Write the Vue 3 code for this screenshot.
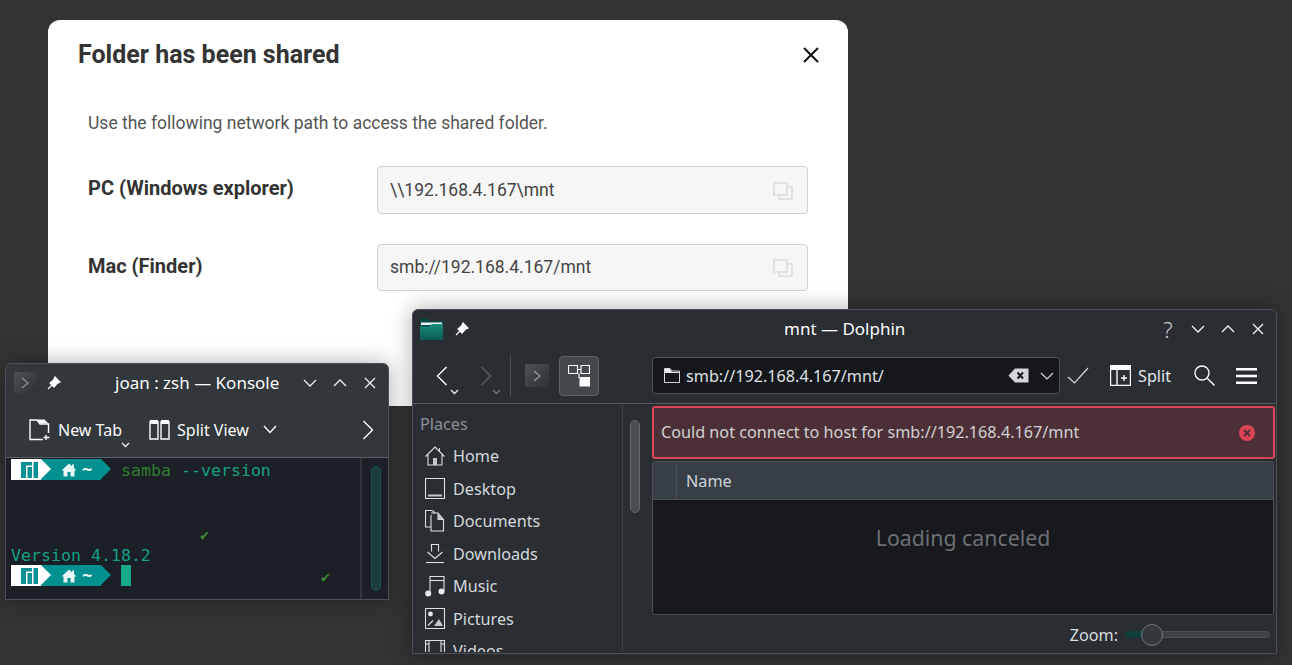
<script setup>
const places = [
  { name: 'Home', paths: ['M0.5 11.5 L10 2 L19.5 11.5', 'M3 9.5 V20 H17 V9.5', 'M14.5 3 V6.5'], solid: ['M8 13 H12 V20 H8 Z'] },
  { name: 'Desktop', paths: ['M0.5 0.5 H19.5 V20.5 H0.5 Z'], solid: ['M3 16.5 H17 V18.5 H3 Z'] },
  { name: 'Documents', paths: ['M6 17 H0.5 V0.5 H7.5', 'M6 5 V21 H18.5 V9.5 L13 3 H6', 'M7.5 0.5 L10 3', 'M13 3 V9.5 H18.5'], solid: ['M13 3 L18.5 9.5 H13 Z'] },
  { name: 'Downloads', paths: ['M6.5 8.5 V1.5 H13.5 V8.5', 'M2.5 9 L10 15.5 L17.5 9', 'M1 19.5 H19'] },
  { name: 'Music', paths: ['M5 18 V1.5 H19 V16', 'M5 5.5 H19'], dots: [[3.2, 18.5, 3], [16.5, 16.5, 3]] },
  { name: 'Pictures', paths: ['M0.5 0.5 H19.5 V20.5 H0.5 Z', 'M3 17.5 L8 12.5'], solid: ['M9 18 L14 11 L18 18 Z'], dots: [[5.5, 6, 2.4]] },
  { name: 'Videos', paths: ['M0.5 0.5 H19.5 V20.5 H0.5 Z', 'M4 0.5 V20.5', 'M16 0.5 V20.5', 'M0.5 4 H4', 'M16 4 H19.5'] }
]
const shares = [
  { label: 'PC (Windows explorer)', value: '\\\\192.168.4.167\\mnt' },
  { label: 'Mac (Finder)', value: 'smb://192.168.4.167/mnt' }
]
</script>

<template>
  <div class="desk">
    <section class="dialog">
      <header class="dlg-head">
        <h1>Folder has been shared</h1>
        <svg class="dlg-close" width="18" height="18" viewBox="0 0 18 18"><path d="M2 2 L16 16 M16 2 L2 16" /></svg>
      </header>
      <div class="dlg-body">
        <p>Use the following network path to access the shared folder.</p>
        <div v-for="s in shares" :key="s.label" class="share">
          <span class="share-label">{{ s.label }}</span>
          <div class="share-field">
            <span>{{ s.value }}</span>
            <svg width="20" height="18" viewBox="0 0 20 18"><path d="M1 1 H14 V13 H1 Z M14 5 H19 V17 H6 V13" /></svg>
          </div>
        </div>
      </div>
    </section>

    <section class="win konsole">
      <div class="titlebar k-title">
        <span class="app-tile"><svg width="10" height="12" viewBox="0 0 10 12"><path d="M2 1 L8 6 L2 11" /></svg></span>
        <svg class="pin" width="14" height="14" viewBox="0 0 14 14"><path d="M8 1 L13 6 L10 7.5 L7 11 L3 7 L6.5 4 Z M4.5 9.5 L1 13" /></svg>
        <span class="title k-t">joan : zsh — Konsole</span>
        <div class="wm">
          <svg width="14" height="14" viewBox="0 0 14 14"><path d="M1 4 L7 10 L13 4" /></svg>
          <svg width="14" height="14" viewBox="0 0 14 14"><path d="M1 10 L7 4 L13 10" /></svg>
          <svg width="14" height="14" viewBox="0 0 14 14"><path d="M2 2 L12 12 M12 2 L2 12" /></svg>
        </div>
      </div>
      <div class="k-tools">
        <svg class="ico" width="22" height="22" viewBox="0 0 22 22"><path d="M8 1 H1 V20.5 H14 M8 1 L11 5 H19.5 V14 M17 16 V21 M14.5 18.5 H20.5" /><path class="fill" d="M8 0.5 H15.5 L19.5 4.5 H11.5 Z" /></svg>
        <span class="k-lbl">New Tab</span>
        <svg class="mini" width="9" height="6" viewBox="0 0 9 6"><path d="M1 1 L4.5 4.5 L8 1" /></svg>
        <svg class="ico k-split" width="21" height="21" viewBox="0 0 21 21"><path d="M1 3 H9 V20 H1 Z M12 3 H20 V20 H12 Z" /><path class="fill" d="M1 1 H9 V5 H1 Z M12 1 H20 V5 H12 Z" /></svg>
        <span class="k-lbl">Split View</span>
        <svg class="ico k-chev" width="14" height="9" viewBox="0 0 14 9"><path d="M1 1 L7 7.5 L13 1" /></svg>
        <svg class="ico k-more" width="12" height="20" viewBox="0 0 12 20"><path d="M1.5 1 L10.5 10 L1.5 19" /></svg>
      </div>
      <div class="term">
        <div class="term-main">
          <div class="t-row">
            <span class="prompt">
              <span class="p-logo"><svg width="17" height="16" viewBox="0 0 17 16"><path d="M0 0 H11 V3.5 H5 V16 H0 Z M6.5 5 H11 V16 H6.5 Z M12.5 0 H17 V16 H12.5 Z" /></svg></span>
              <span class="p-teal"><svg width="16" height="14" viewBox="0 0 16 14"><path d="M8 0.5 L11 3.2 V1.5 H13 V5 L15.5 7.5 H13.5 V13.5 H9.5 V9 H6.5 V13.5 H2.5 V7.5 H0.5 Z" /></svg><b>~</b></span>
            </span>
            <span class="cmd"><i>samba</i> --version</span>
          </div>
          <div class="t-row"></div>
          <div class="t-row"></div>
          <div class="t-row"><span class="tick tick-a">✔</span></div>
          <div class="t-row ver">Version 4.18.2</div>
          <div class="t-row">
            <span class="prompt">
              <span class="p-logo"><svg width="17" height="16" viewBox="0 0 17 16"><path d="M0 0 H11 V3.5 H5 V16 H0 Z M6.5 5 H11 V16 H6.5 Z M12.5 0 H17 V16 H12.5 Z" /></svg></span>
              <span class="p-teal"><svg width="16" height="14" viewBox="0 0 16 14"><path d="M8 0.5 L11 3.2 V1.5 H13 V5 L15.5 7.5 H13.5 V13.5 H9.5 V9 H6.5 V13.5 H2.5 V7.5 H0.5 Z" /></svg><b>~</b></span>
            </span>
            <span class="cursor"></span>
            <span class="tick tick-b">✔</span>
          </div>
        </div>
        <div class="term-sb"><span></span></div>
      </div>
    </section>

    <section class="win dolphin">
      <div class="titlebar d-title">
        <svg class="folder" width="23" height="22" viewBox="0 0 23 22">
          <defs><linearGradient id="fg" x1="0" y1="0" x2="0" y2="1"><stop offset="0" stop-color="#1a8c7f" /><stop offset="1" stop-color="#0b5a52" /></linearGradient></defs>
          <path d="M0 1 H8 L10 3 H23 V21 H0 Z" fill="#0a4a44" />
          <path d="M1 4.5 H22 V7 H1 Z" fill="#eef1f1" />
          <path d="M0 8.5 L9 8.5 L12 6 H23 V22 H0 Z" fill="url(#fg)" />
        </svg>
        <svg class="pin d-pin" width="14" height="14" viewBox="0 0 14 14"><path d="M8 1 L13 6 L10 7.5 L7 11 L3 7 L6.5 4 Z M4.5 9.5 L1 13" /></svg>
        <span class="title d-t">mnt — Dolphin</span>
        <div class="wm">
          <span class="help">?</span>
          <svg width="14" height="14" viewBox="0 0 14 14"><path d="M1 4 L7 10 L13 4" /></svg>
          <svg width="14" height="14" viewBox="0 0 14 14"><path d="M1 10 L7 4 L13 10" /></svg>
          <svg width="14" height="14" viewBox="0 0 14 14"><path d="M2 2 L12 12 M12 2 L2 12" /></svg>
        </div>
      </div>

      <div class="d-tools">
        <svg class="ico d-back" width="12" height="20" viewBox="0 0 12 20"><path d="M10.5 1 L1.5 10 L10.5 19" /></svg>
        <svg class="mini d-m1" width="9" height="6" viewBox="0 0 9 6"><path d="M1 1 L4.5 4.5 L8 1" /></svg>
        <svg class="ico dim d-fwd" width="12" height="20" viewBox="0 0 12 20"><path d="M1.5 1 L10.5 10 L1.5 19" /></svg>
        <svg class="mini dim d-m2" width="9" height="6" viewBox="0 0 9 6"><path d="M1 1 L4.5 4.5 L8 1" /></svg>
        <span class="d-sep"></span>
        <span class="term-tile"><svg width="8" height="12" viewBox="0 0 8 12"><path d="M1 1 L7 6 L1 11" /></svg></span>
        <span class="tree-btn">
          <svg width="22" height="22" viewBox="0 0 22 22">
            <path class="thin" d="M0.5 0.5 H9.5 V8.5 H0.5 Z M13 0.5 H21.5 V8.5 H13 Z M9.5 4.5 H13 M11 8.5 V13" />
            <rect x="11.5" y="12" width="10.5" height="9.5" fill="#fcfcfc" />
          </svg>
        </span>
        <div class="loc">
          <svg class="loc-ico" width="16" height="15" viewBox="0 0 16 15"><path d="M0.5 0.5 H6 L8 3 H15.5 V14.5 H0.5 Z" fill="none" stroke="#d6d9dc" /><path d="M1 1 H6 L8 4 H15 V5 H1 Z" fill="#e6e8ea" /></svg>
          <span class="loc-txt">smb://192.168.4.167/mnt/</span>
          <svg class="loc-clear" width="21" height="15" viewBox="0 0 21 15"><path d="M7 0.5 H20.5 V14.5 H7 L0.5 7.5 Z" fill="#d4d6d9" /><path d="M9.5 4.5 L15 10.5 M15 4.5 L9.5 10.5" stroke="#16181c" stroke-width="2" fill="none" /></svg>
          <svg class="ico loc-drop" width="14" height="8" viewBox="0 0 14 8"><path d="M1 1 L7 7 L13 1" /></svg>
        </div>
        <svg class="ico d-check" width="22" height="17" viewBox="0 0 22 17"><path d="M1 10 L7.5 16 L21 1" /></svg>
        <svg class="ico d-split" width="21" height="21" viewBox="0 0 21 21"><path d="M0.5 0.5 H20.5 V20.5 H0.5 Z M7 5 V20.5 M14 10 V16 M11 13 H17" /><path class="fill" d="M0 0 H21 V5 H0 Z" /></svg>
        <span class="d-lbl">Split</span>
        <svg class="ico d-search" width="21" height="21" viewBox="0 0 21 21"><circle cx="8" cy="8" r="7" /><path d="M13 13 L20.5 20.5" /></svg>
        <svg class="d-menu" width="21" height="16" viewBox="0 0 21 16"><path d="M0 0 H21 V2.6 H0 Z M0 6.7 H21 V9.3 H0 Z M0 13.4 H21 V16 H0 Z" fill="#fcfcfc" /></svg>
      </div>

      <div class="d-main">
        <aside class="side">
          <div class="side-list">
            <div class="side-head">Places</div>
            <div v-for="p in places" :key="p.name" class="place">
              <svg class="ico" width="21" height="22" viewBox="0 0 21 22">
                <path v-for="d in p.paths" :key="d" :d="d" />
                <path v-for="d in (p.solid || [])" :key="d" :d="d" class="fill soft" />
                <circle v-for="c in (p.dots || [])" :key="c[0]" :cx="c[0]" :cy="c[1]" :r="c[2]" class="dot" />
              </svg>
              <span>{{ p.name }}</span>
            </div>
          </div>
        </aside>
        <div class="content">
          <div class="msg">
            <span>Could not connect to host for smb://192.168.4.167/mnt</span>
            <svg width="16" height="16" viewBox="0 0 16 16"><circle cx="8" cy="8" r="8" fill="#da4453" /><path d="M5 5 L11 11 M11 5 L5 11" stroke="#4d3037" stroke-width="1.8" /></svg>
          </div>
          <div class="table">
            <div class="thead"><span class="th-a"></span><span class="th-b">Name</span></div>
            <div class="tbody">Loading canceled</div>
          </div>
          <div class="status">
            <span class="z-lbl">Zoom:</span>
            <div class="slider"><i class="s-fill"></i><i class="s-knob"></i></div>
          </div>
        </div>
      </div>
    </section>
  </div>
</template>

<style>
html, body { margin: 0; background: #333; }
</style>

<style scoped>
.desk { position: relative; width: 1292px; height: 665px; overflow: hidden; background: #333333; font-family: "Noto Sans", sans-serif; }

.dialog { position: absolute; left: 48px; top: 20px; width: 800px; height: 386px; box-sizing: border-box; background: #fff; border-radius: 12px 12px 0 0; font-family: Roboto, sans-serif; color: #333; }
.dlg-head { display: flex; justify-content: space-between; align-items: center; padding: 20px 28px 0 30px; }
h1 { margin: 0; font-size: 25px; line-height: 30px; font-weight: 700; color: #333; }
.dlg-close { fill: none; stroke: #111; stroke-width: 2; }
.dlg-body { padding: 42px 40px 0; }
.dlg-body p { margin: 0 0 32px; font-size: 17.5px; line-height: 22px; color: #555; }
.share { display: flex; align-items: flex-start; margin-bottom: 30px; }
.share-label { width: 289px; font-size: 20px; line-height: 45.5px; font-weight: 700; color: #333; }
.share-field { flex: 1; height: 47.5px; box-sizing: border-box; display: flex; align-items: center; justify-content: space-between; padding: 0 14px 0 12px; background: #f6f6f6; border: 1px solid #d0d0d0; border-radius: 4px; font-size: 17.5px; color: #444; }
.share-field svg { fill: none; stroke: #dcdcdc; stroke-width: 1.6; margin-top: 2px; }

.win { position: absolute; box-sizing: border-box; display: flex; flex-direction: column; overflow: hidden; box-shadow: 0 0 22px rgba(0,0,0,.32); border: 1px solid #4b5056; border-radius: 6px 6px 0 0; color: #fcfcfc; }
.ico { fill: none; stroke: #fcfcfc; stroke-width: 1.4; flex: none; }
.ico .fill { fill: #fcfcfc; stroke: none; }
.ico .soft { fill: #c4c8cb; }
.ico.dim { stroke: #5b6065; }
.ico .dot { fill: #e8ebee; stroke: none; }
.mini { fill: none; stroke: #eceef0; stroke-width: 1.3; flex: none; }
.mini.dim { stroke: #72777c; }
.titlebar { display: flex; align-items: center; flex: none; position: relative; }
.title { position: absolute; font-size: 17px; white-space: nowrap; }
.pin { fill: #fcfcfc; stroke: #fcfcfc; stroke-width: 1.2; flex: none; }
.wm { position: absolute; top: 0; bottom: 0; right: 11px; display: flex; align-items: center; gap: 16px; }
.wm svg { fill: none; stroke: #eef0f2; stroke-width: 1.3; }

.konsole { left: 5px; top: 363px; width: 384px; height: 237px; background: #32373b; }
.k-title { height: 37px; padding-left: 8px; }
.app-tile { width: 22px; height: 22px; border-radius: 2px; background: linear-gradient(135deg, #4e5354, #2b2f31); display: flex; align-items: center; justify-content: center; flex: none; }
.app-tile svg { fill: none; stroke: #8f9496; stroke-width: 1.1; }
.k-title .pin { margin-left: 11px; }
.k-t { left: 109px; }
.k-tools { height: 57px; display: flex; align-items: center; padding-left: 23px; padding-top: 1px; box-sizing: border-box; position: relative; flex: none; border-bottom: 1px solid #5b6065; }
.k-lbl { font-size: 16px; margin-left: 7px; white-space: nowrap; }
.k-tools .mini { position: absolute; left: 115px; top: 41px; }
.k-split { margin-left: 27px; }
.k-chev { margin-left: 14px; }
.k-more { margin-left: auto; margin-right: 14px; }
.term { flex: 1; display: flex; background: #1b1f26; min-height: 0; }
.term-main { width: 356px; box-sizing: border-box; padding: 1px 0 0 5px; flex: none; border-right: 2px solid #30353a; font-family: "DejaVu Sans Mono", monospace; font-size: 16.6px; color: #16a085; position: relative; }
.t-row { height: 21.2px; line-height: 23px; display: flex; align-items: center; white-space: nowrap; position: relative; box-sizing: border-box; }
.ver { padding-top: 2px; }
.prompt { display: flex; height: 21px; flex: none; width: 99px; }
.p-logo { width: 30px; background: #fff; position: relative; display: flex; align-items: center; padding-left: 10px; box-sizing: border-box; z-index: 1; flex: none; }
.p-logo svg { fill: #0a8f95; }
.p-logo::after { content: ""; position: absolute; left: 30px; top: 0; border-left: 10px solid #fff; border-top: 10.5px solid transparent; border-bottom: 10.5px solid transparent; }
.p-teal { flex: none; width: 60px; background: #009090; position: relative; display: flex; align-items: center; gap: 5px; padding-left: 20px; box-sizing: border-box; }
.p-teal svg { fill: #e8f6f6; flex: none; }
.p-teal b { color: #e8f6f6; font-size: 17px; font-weight: 700; line-height: 21px; }
.p-teal::after { content: ""; position: absolute; left: 60px; top: 0; border-left: 10px solid #009090; border-top: 10.5px solid transparent; border-bottom: 10.5px solid transparent; }
.cmd { margin-left: 11px; color: #16a085; padding-top: 2px; }
.cmd i { font-style: normal; color: #2f7d32; }
.cursor { width: 10px; height: 21px; background: #18a98a; margin-left: 11px; }
.tick { position: absolute; color: #3a8a34; font-size: 15px; }
.tick-a { left: 189px; top: 1px; }
.tick-b { left: 310px; top: 1px; }
.term-sb { flex: 1; display: flex; justify-content: center; padding: 8px 0 0 2px; }
.term-sb span { width: 10px; height: 125px; box-sizing: border-box; background: #1f3d3c; border: 1px solid #145a50; border-radius: 5px; }

.dolphin { left: 412px; top: 309px; width: 865px; height: 345px; background: #2a2e33; border-radius: 6px 6px 0 0; }
.d-title { height: 37px; padding-left: 7px; }
.folder { flex: none; }
.d-pin { margin-left: 12px; }
.d-t { left: 371px; }
.help { font-size: 22px; font-weight: 300; color: #c9ccd0; line-height: 1; width: 14px; text-align: center; }
.d-tools { height: 57px; flex: none; box-sizing: border-box; position: relative; display: flex; align-items: center; border-bottom: 1px solid #54595e; padding-top: 1px; }
.d-back { margin-left: 23px; }
.d-m1 { position: absolute; left: 37px; top: 42px; }
.d-fwd { margin-left: 32px; }
.d-m2 { position: absolute; left: 79px; top: 42px; }
.d-sep { width: 1px; height: 41px; background: #4c5156; margin-left: 18px; }
.term-tile { width: 24px; height: 23px; margin-left: 14px; flex: none; background: linear-gradient(135deg, #4d5254, #2e3234); display: flex; align-items: center; justify-content: center; border-radius: 1px; }
.term-tile svg { fill: none; stroke: #9a9ea0; stroke-width: 1.1; }
.tree-btn { width: 40px; height: 40px; margin-left: 10px; flex: none; box-sizing: border-box; background: #43484d; border: 1px solid #5d6267; border-radius: 4px; display: flex; align-items: center; justify-content: center; }
.thin { fill: none; stroke: #fcfcfc; stroke-width: 1.2; }
.loc { width: 408px; height: 37px; margin-left: 53px; flex: none; box-sizing: border-box; background: #15171b; border: 1px solid #4f5358; border-radius: 4px; display: flex; align-items: center; padding: 0 5px 0 11px; font-size: 16.2px; color: #dfe2e4; }
.loc-txt { margin-left: 6px; white-space: nowrap; }
.loc-clear { margin-left: auto; flex: none; }
.loc-drop { margin-left: 11px; stroke-width: 1.2; stroke: #d5d8da; }
.d-check { margin-left: 7px; stroke-width: 1.2; stroke: #d5d8da; }
.d-split { margin-left: 21px; }
.d-lbl { font-size: 16.2px; margin-left: 7px; color: #e4e7ea; }
.d-search { margin-left: 23px; }
.d-menu { margin-left: 21px; flex: none; }

.d-main { flex: 1; display: flex; min-height: 0; }
.side { width: 209px; flex: none; height: 248px; border-right: 1px solid #3d4247; overflow: hidden; }
.side-list { padding: 0 0 0 7px; }
.side-head { height: 40px; line-height: 40px; font-size: 16.2px; color: #8c9095; }
.place { height: 32.5px; display: flex; align-items: center; padding-left: 5px; font-size: 16.2px; color: #d4d8dc; gap: 7px; white-space: nowrap; }
.place svg { stroke: #dde0e3; stroke-width: 1.1; }
.place:nth-child(2) { margin-top: -4px; }
.content { flex: 1; box-sizing: border-box; padding: 2px 1px 0 29px; display: flex; flex-direction: column; min-width: 0; position: relative; }
.content::before { content: ""; position: absolute; left: 7px; top: 16px; width: 10px; height: 93px; box-sizing: border-box; background: #494e53; border: 1px solid #62676c; border-radius: 5px; }
.msg { height: 53px; box-sizing: border-box; flex: none; background: #4d3037; border: 2px solid #d9455a; border-radius: 3px; display: flex; align-items: center; justify-content: space-between; padding: 0 18px 2px 7px; font-size: 16.2px; color: #d2d0d2; }
.msg svg { margin-top: 2px; }
.table { margin-top: 2px; margin-right: 1px; height: 154px; box-sizing: border-box; flex: none; border: 1px solid #4a4f54; border-radius: 3px; display: flex; flex-direction: column; overflow: hidden; }
.thead { height: 38px; flex: none; display: flex; background: #373e45; border-bottom: 1px solid #4a4f54; font-size: 16.2px; color: #d0d4d8; box-sizing: border-box; }
.th-a { width: 23px; border-right: 1px solid #4a4f54; }
.th-b { padding-left: 9px; line-height: 38px; }
.tbody { flex: 1; background: #17191d; text-align: center; font-size: 21.3px; line-height: 76px; color: #6c7074; }
.status { flex: 1; display: flex; align-items: center; justify-content: flex-end; font-size: 16.2px; color: #d8dcdf; gap: 7px; padding-right: 5px; }
.z-lbl { padding-top: 2px; }
.slider { width: 145px; height: 7px; box-sizing: border-box; position: relative; background: #3d4246; border: 1px solid #4c5155; border-radius: 4px; }
.s-fill { position: absolute; left: -1px; top: -1px; width: 20px; height: 7px; background: #0f3f3b; border-radius: 4px 0 0 4px; }
.s-knob { position: absolute; left: 15px; top: -8px; width: 22px; height: 22px; box-sizing: border-box; background: #33383d; border: 1px solid #70757a; border-radius: 50%; }
</style>
